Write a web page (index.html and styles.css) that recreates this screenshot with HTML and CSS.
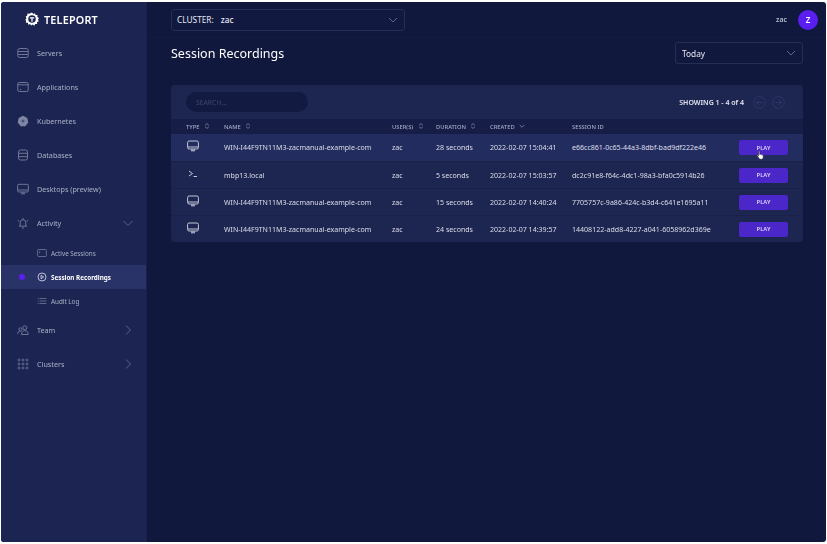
FILE: index.html
```html
<!DOCTYPE html>
<html lang="en">
<head>
<meta charset="utf-8">
<title>Session Recordings</title>
<link rel="stylesheet" href="styles.css">
</head>
<body>
<div class="app">
  <aside class="sidebar">
    <div class="logo">
      <svg class="logo-icon" viewBox="0 0 16 16"><path d="M8 .5l1.4 1.7 2-.8.7 2 2.200.1-.2 2.200 1.900 1.100-1.200 1.800 1 1.900-1.900 1-.1 2.200-2.200 0-1 1.900-1.800-1.200L7 15.500l-1.200-1.700-2 .7-.6-2.100-2.200-.2.300-2.200L.4 8.800 1.700 7 .8 5l1.900-1 0-2.200 2.200.1z" fill="#fff"/><circle cx="8" cy="8" r="4.300" fill="#1c2550"/><path d="M5.500 6h5v1.300H8.700V11H7.300V7.300H5.500z" fill="#fff"/></svg>
      <span>TELEPORT</span>
    </div>
    <nav>
      <a class="nav-item"><svg class="ico" viewBox="0 0 12 12"><rect x=".8" y="1.500" width="10.400" height="9" rx="2"/><path d="M1 4.500h10M1 7.500h10"/></svg>Servers</a>
      <a class="nav-item"><svg class="ico" viewBox="0 0 12 12"><rect x=".8" y="1.500" width="10.400" height="9" rx="1.500"/><path d="M1 3.800h10M3 8.500h1.200"/></svg>Applications</a>
      <a class="nav-item"><svg class="ico" viewBox="0 0 12 12"><path class="solid" d="M6 .8l4.300 2.100 1 4.600-3 3.700H3.700l-3-3.700 1-4.600z"/><circle class="cut" cx="6" cy="6" r="1.500"/></svg>Kubernetes</a>
      <a class="nav-item"><svg class="ico" viewBox="0 0 12 12"><rect x="1.500" y="1" width="9" height="10" rx="2"/><path d="M1.500 4.300h9M1.500 7.600h9"/></svg>Databases</a>
      <a class="nav-item"><svg class="ico" viewBox="0 0 12 12"><rect x=".6" y="1.300" width="10.800" height="7.700" rx="1.300"/><path d="M1 7h10M4 10.800h4M5 9v1.500M7 9v1.500"/></svg>Desktops (preview)</a>
      <a class="nav-item"><svg class="ico" viewBox="0 0 12 12"><path d="M3.200 9V5.500a2.800 2.800 0 0 1 5.600 0V9M2 9.200h8M5 11h2M6 1v1.500M.8 3.500l1.500.8M11.200 3.500l-1.500.8"/></svg>Activity<svg class="chev" viewBox="0 0 10 10"><path d="M.5 3l4.500 4.500L9.500 3"/></svg></a>
      <div class="subnav">
        <a class="sub-item"><svg class="ico" viewBox="0 0 12 12"><rect x=".8" y="1.800" width="10.400" height="8.400" rx=".8"/><path d="M2.600 4.200l1.200.9-1.200.9"/></svg>Active Sessions</a>
        <a class="sub-item active"><i class="dot"></i><svg class="ico" viewBox="0 0 12 12"><circle cx="6" cy="6" r="4.800"/><path d="M4.800 3.900L8 6 4.800 8.100z"/></svg>Session Recordings</a>
        <a class="sub-item"><svg class="ico" viewBox="0 0 12 12"><path d="M.8 3h1.200M3 3h8.200M.8 6h1.200M3 6h8.200M.8 9h1.200M3 9h8.200"/></svg>Audit Log</a>
      </div>
      <a class="nav-item"><svg class="ico" viewBox="0 0 12 12"><circle cx="7.800" cy="3.800" r="2"/><circle cx="3.400" cy="5.300" r="1.500"/><path d="M4.500 10.500c0-2.500 1.200-3.800 3.300-3.800s3.400 1.300 3.400 3.800zM.7 9.800c0-1.500.8-2.500 2.700-2.500"/></svg>Team<svg class="chev" viewBox="0 0 10 10"><path d="M3 .5L7.500 5 3 9.500"/></svg></a>
      <a class="nav-item"><svg class="ico" viewBox="0 0 12 12"><g class="dots"><circle cx="2" cy="2" r="1"/><circle cx="6" cy="2" r="1"/><circle cx="10" cy="2" r="1"/><circle cx="2" cy="6" r="1"/><circle cx="6" cy="6" r="1"/><circle cx="10" cy="6" r="1"/><circle cx="2" cy="10" r="1"/><circle cx="6" cy="10" r="1"/><circle cx="10" cy="10" r="1"/></g></svg>Clusters<svg class="chev" viewBox="0 0 10 10"><path d="M3 .5L7.500 5 3 9.500"/></svg></a>
    </nav>
  </aside>

  <main class="main">
    <header class="topbar">
      <div class="select cluster">
        <span class="cluster-label">CLUSTER:</span><span class="cluster-name">zac</span>
        <svg class="select-chev" viewBox="0 0 10 10"><path d="M1 3l4 4 4-4"/></svg>
      </div>
      <div class="user">
        <span class="user-name">zac</span>
        <span class="avatar">Z</span>
      </div>
    </header>

    <div class="title-row">
      <h1>Session Recordings</h1>
      <div class="select range">
        <span>Today</span>
        <svg class="select-chev" viewBox="0 0 10 10"><path d="M1 3l4 4 4-4"/></svg>
      </div>
    </div>

    <section class="card">
      <div class="card-head">
        <div class="search">SEARCH...</div>
        <div class="pager">
          <span class="showing">SHOWING 1 - 4 of 4</span>
          <svg class="arrow" viewBox="0 0 14 14"><circle cx="7" cy="7" r="6.300"/><path d="M10.500 7h-7M6.500 4l-3 3 3 3"/></svg>
          <svg class="arrow" viewBox="0 0 14 14"><circle cx="7" cy="7" r="6.300"/><path d="M3.500 7h7M7.500 4l3 3-3 3"/></svg>
        </div>
      </div>
      <table>
        <colgroup>
          <col class="c-type"><col class="c-name"><col class="c-user"><col class="c-dur"><col class="c-created"><col class="c-id">
        </colgroup>
        <thead>
          <tr>
            <th>TYPE <svg class="sort" viewBox="0 0 8 8"><path d="M1.500 3L4 .8 6.500 3M1.500 5L4 7.200 6.500 5"/></svg></th>
            <th>NAME <svg class="sort" viewBox="0 0 8 8"><path d="M1.500 3L4 .8 6.500 3M1.500 5L4 7.200 6.500 5"/></svg></th>
            <th>USER(S) <svg class="sort" viewBox="0 0 8 8"><path d="M1.500 3L4 .8 6.500 3M1.500 5L4 7.200 6.500 5"/></svg></th>
            <th>DURATION <svg class="sort" viewBox="0 0 8 8"><path d="M1.500 3L4 .8 6.500 3M1.500 5L4 7.200 6.500 5"/></svg></th>
            <th>CREATED <svg class="sort down" viewBox="0 0 8 8"><path d="M.8 2.500L4 5.700l3.200-3.200"/></svg></th>
            <th>SESSION ID</th>
          </tr>
        </thead>
        <tbody>
          <tr class="hover">
            <td><svg class="type" viewBox="0 0 12 12"><rect x=".6" y="1" width="10.800" height="8" rx="1.500"/><path d="M1 7h10M4 10.800h4M5 9v1.500M7 9v1.500"/></svg></td>
            <td>WIN-I44F9TN11M3-zacmanual-example-com</td><td>zac</td><td>28 seconds</td><td>2022-02-07 15:04:41</td>
            <td class="id-cell"><span>e66cc861-0c65-44a3-8dbf-bad9df222e46</span><button class="play">PLAY</button></td>
          </tr>
          <tr>
            <td><svg class="type" viewBox="0 0 12 12"><path d="M2 3l3.500 2.500L2 8M6.500 8.500h3.500"/></svg></td>
            <td>mbp13.local</td><td>zac</td><td>5 seconds</td><td>2022-02-07 15:03:57</td>
            <td class="id-cell"><span>dc2c91e8-f64c-4dc1-98a3-bfa0c5914b26</span><button class="play">PLAY</button></td>
          </tr>
          <tr>
            <td><svg class="type" viewBox="0 0 12 12"><rect x=".6" y="1" width="10.800" height="8" rx="1.500"/><path d="M1 7h10M4 10.800h4M5 9v1.500M7 9v1.500"/></svg></td>
            <td>WIN-I44F9TN11M3-zacmanual-example-com</td><td>zac</td><td>15 seconds</td><td>2022-02-07 14:40:24</td>
            <td class="id-cell"><span>7705757c-9a86-424c-b3d4-c641e1695a11</span><button class="play">PLAY</button></td>
          </tr>
          <tr>
            <td><svg class="type" viewBox="0 0 12 12"><rect x=".6" y="1" width="10.800" height="8" rx="1.500"/><path d="M1 7h10M4 10.800h4M5 9v1.500M7 9v1.500"/></svg></td>
            <td>WIN-I44F9TN11M3-zacmanual-example-com</td><td>zac</td><td>24 seconds</td><td>2022-02-07 14:39:57</td>
            <td class="id-cell"><span>14408122-add8-4227-a041-6058962d369e</span><button class="play">PLAY</button></td>
          </tr>
        </tbody>
      </table>
    </section>
  </main>
  <svg class="cursor" viewBox="0 0 10 12"><path d="M3 1.200c.6-.5 1.200 0 1.200.6v3l.8-.2c.5 0 .8.100 1 .4l1 .2c.6.100 1 .5 1 1.100v2c0 1-.8 1.800-1.800 1.800H5c-.7 0-1.200-.3-1.600-.9L1.400 6.300c-.3-.5.300-1 .8-.7l.8.700z" fill="#fff" stroke="#222" stroke-width=".6"/></svg>
</div>
</body>
</html>
```

FILE: styles.css
```css
* { box-sizing: border-box; }
html, body { margin: 0; padding: 0; height: 100%; overflow: hidden; }
body {
  background: #fff;
  font-family: "Noto Sans", "Open Sans", sans-serif;
  color: #fff;
}
.app {
  position: relative;
  display: flex;
  width: 825px;
  height: 540px;
  margin: 2px 0 0 1px;
  background: #10183e;
  border-radius: 3px;
  overflow: hidden;
  filter: blur(.3px);
}

/* Sidebar */
.sidebar {
  flex: 0 0 146px;
  background: #1c2551;
  border-right: 1px solid #1a2149;
}
.logo {
  display: flex;
  align-items: center;
  gap: 5px;
  height: 34px;
  padding-left: 24px;
  font-size: 10.800px;
  font-weight: 600;
  letter-spacing: .2px;
}
.logo-icon { width: 14px; height: 14px; }
.nav-item, .sub-item {
  display: flex;
  align-items: center;
  color: #aab0c8;
}
.nav-item {
  position: relative;
  height: 34px;
  padding-left: 16px;
  font-size: 7.200px;
}
.nav-item .ico { width: 12px; height: 12px; margin-right: 8px; }
.ico, .chev, .select-chev, .arrow, .sort, .type {
  fill: none;
  stroke: currentColor;
  stroke-width: 1;
}
.ico { color: #6f7698; flex: none; }
.ico .solid { fill: #7f86a5; stroke: none; }
.ico .cut { fill: #4a5278; stroke: none; }
.ico .dots { stroke-width: .8; }
.chev {
  position: absolute;
  left: 122px;
  top: 12px;
  width: 10px;
  height: 10px;
  color: #59608a;
}
.subnav { padding-top: 1px; }
.sub-item {
  position: relative;
  height: 24px;
  padding-left: 36px;
  font-size: 6.300px;
}
.sub-item .ico { width: 10px; height: 10px; margin-right: 4px; }
.sub-item.active {
  background: #2a3368;
  color: #fff;
  font-weight: 700;
}
.sub-item.active .ico { color: #d5d8e6; }
.dot {
  position: absolute;
  left: 18px;
  top: 9px;
  width: 6px;
  height: 6px;
  border-radius: 50%;
  background: #5a1ff0;
}

/* Main */
.main { flex: 1; min-width: 0; padding: 0 23px 0 24px; }
.topbar {
  display: flex;
  align-items: center;
  justify-content: space-between;
  height: 36px;
  margin: 0 -23px 0 -24px;
  padding: 0 8px 0 24px;
  border-bottom: 1px solid #131b42;
}
.select {
  position: relative;
  display: flex;
  align-items: center;
  border: 1px solid #262e58;
  border-radius: 3px;
  font-size: 8.300px;
  color: #e6e8f2;
}
.cluster { width: 234px; height: 22px; padding-left: 5px; background: #111940; }
.cluster-label { margin-right: 7px; }
.cluster-name { font-weight: 500; }
.select-chev {
  position: absolute;
  right: 6px;
  top: 50%;
  width: 10px;
  height: 10px;
  margin-top: -5px;
  color: #5f6689;
}
.user { display: flex; align-items: center; gap: 11px; }
.user-name { font-size: 7px; font-weight: 600; color: #b6bace; }
.avatar {
  display: flex;
  align-items: center;
  justify-content: center;
  width: 20px;
  height: 20px;
  border-radius: 50%;
  background: #5a1ff0;
  font-size: 8px;
  font-weight: 600;
}
.title-row {
  display: flex;
  align-items: center;
  justify-content: space-between;
  height: 30px;
  margin-bottom: 17px;
}
h1 { margin: 0; font-size: 12.500px; font-weight: 400; color: #fff; }
.range { width: 128px; height: 22px; padding-left: 6px; font-size: 8.300px; }
.card {
  background: #1d2551;
  border-radius: 4px;
  overflow: hidden;
}
.card-head {
  display: flex;
  align-items: center;
  justify-content: space-between;
  height: 34px;
  padding: 0 18px 0 15px;
}
.search {
  display: flex;
  align-items: center;
  width: 122px;
  height: 20px;
  padding-left: 10px;
  border-radius: 10px;
  background: #121a42;
  font-size: 6.800px;
  color: #3d4570;
}
.pager { display: flex; align-items: center; gap: 6px; }
.showing { margin-right: 3px; font-size: 7px; font-weight: 600; color: #e4e6f0; }
.arrow { width: 13px; height: 13px; color: #31396a; }

/* Table */
table {
  width: 100%;
  table-layout: fixed;
  border-collapse: collapse;
}
.c-type { width: 38px; }
.c-name { width: 168px; }
.c-user { width: 44px; }
.c-dur { width: 54px; }
.c-created { width: 82px; }
th, td { padding: 0 0 0 15px; text-align: left; white-space: nowrap; }
th {
  height: 15px;
  background: #161d47;
  font-size: 5.800px;
  font-weight: 500;
  color: #a6abc4;
}
.sort { width: 6px; height: 6px; margin-left: 3px; vertical-align: -.5px; color: #8b91ad; }
td {
  height: 27px;
  padding-top: 1px;
  border-top: 1px solid #1a2149;
  font-size: 7.050px;
  color: #dcdfeb;
}
tbody tr:first-child td { padding-top: 0; border-top: 0; }
tr.hover td { background: #232c5e; }
.type { display: block; width: 12px; height: 12px; margin: -3px 0 0 1px; color: #c3c7da; }
.id-cell { position: relative; }
.play {
  position: absolute;
  right: 15px;
  top: 6px;
  width: 49px;
  height: 15px;
  padding: 0;
  border: 0;
  border-radius: 2px;
  background: #4b26c8;
  color: #dcd6fa;
  font-family: inherit;
  font-size: 5.800px;
  font-weight: 600;
}
.cursor {
  position: absolute;
  left: 755px;
  top: 148px;
  width: 9px;
  height: 11px;
}
```
